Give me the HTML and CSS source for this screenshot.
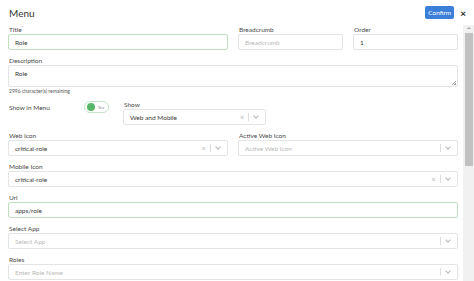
FILE: index.html
```html
<html>
  <head>
    <title>Menu</title>
    <link rel="stylesheet" href="styles.css">
  </head>
  <body>
    <div class="dialog">
      <div class="dialog-header">
        <span class="dialog-title">Menu</span>
        <button class="btn-confirm">Confirm</button>
        <span class="btn-close">&times;</span>
      </div>

      <div class="dialog-main">
        <div class="dialog-body">
          <div class="grid">
            <div class="field span-6">
              <label>Title<sup>*</sup></label>
              <div class="input valid">Role</div>
            </div>
            <div class="field span-3">
              <label>Breadcrumb</label>
              <div class="input placeholder">Breadcrumb</div>
            </div>
            <div class="field span-3">
              <label>Order</label>
              <div class="input">1</div>
            </div>

            <div class="field span-12">
              <label>Description</label>
              <div class="textarea">Role<span class="resize"></span></div>
              <div class="hint">2996 character(s) remaining</div>
            </div>

            <div class="field span-3 toggle-field">
              <label>Show in Menu</label>
              <div class="toggle"><span class="knob"></span><span class="toggle-text">Yes</span></div>
            </div>
            <div class="field span-4">
              <label>Show</label>
              <div class="select">
                <span class="value">Web and Mobile</span>
                <span class="clear">&times;</span><span class="sep"></span><span class="chev"></span>
              </div>
            </div>
            <div class="span-5"></div>

            <div class="field span-6">
              <label>Web Icon</label>
              <div class="select">
                <span class="value">critical-role</span>
                <span class="clear">&times;</span><span class="sep"></span><span class="chev"></span>
              </div>
            </div>
            <div class="field span-6">
              <label>Active Web Icon</label>
              <div class="select">
                <span class="value placeholder">Active Web Icon</span>
                <span class="sep"></span><span class="chev"></span>
              </div>
            </div>

            <div class="field span-12">
              <label>Mobile Icon</label>
              <div class="select">
                <span class="value">critical-role</span>
                <span class="clear">&times;</span><span class="sep"></span><span class="chev"></span>
              </div>
            </div>

            <div class="field span-12">
              <label>Url</label>
              <div class="input valid">apps/role</div>
            </div>

            <div class="field span-12">
              <label>Select App</label>
              <div class="select">
                <span class="value placeholder">Select App</span>
                <span class="sep"></span><span class="chev"></span>
              </div>
            </div>

            <div class="field span-12">
              <label>Roles</label>
              <div class="select">
                <span class="value placeholder">Enter Role Name</span>
                <span class="sep"></span><span class="chev"></span>
              </div>
            </div>
          </div>
        </div>

        <div class="scrollbar">
          <span class="scroll-up"></span>
          <span class="scroll-thumb"></span>
        </div>
      </div>
    </div>
  </body>
</html>
```

FILE: styles.css
```css
body {
  margin: 0px;
  font-family: Lato, "Open Sans", sans-serif;
  color: #3a3a3a;
  background: #ffffff;
}

.dialog {
  width: 474px;
  height: 281px;
  display: flex;
  flex-direction: column;
  overflow: hidden;
}

.dialog-header {
  display: flex;
  align-items: center;
  height: 25px;
  padding: 0px 8px 0px 9px;
  flex-shrink: 0;
}

.dialog-title {
  font-size: 10px;
  flex: 1;
  color: #333333;
}

.btn-confirm {
  font-family: Lato, sans-serif;
  font-size: 6.5px;
  color: #ffffff;
  background: #3b7fd9;
  border: none;
  border-radius: 2px;
  height: 13px;
  width: 29px;
  padding: 0px;
  margin-right: 6px;
}

.btn-close {
  font-size: 10px;
  font-weight: bold;
  color: #222222;
  line-height: 10px;
}

.dialog-main {
  flex: 1;
  display: flex;
  min-height: 0;
}

.dialog-body {
  flex: 1;
  overflow: hidden;
  padding: 0px 5px 0px 8px;
}

/* scroll track drawn by hand, headless chrome hides the real one */
.scrollbar {
  width: 11px;
  flex-shrink: 0;
  background: #f1f1f1;
  display: flex;
  flex-direction: column;
  align-items: center;
}

.scroll-up {
  width: 0px;
  height: 0px;
  border-left: 2px solid transparent;
  border-right: 2px solid transparent;
  border-bottom: 2px solid #a3a3a3;
  margin: 2px 0px 4px 0px;
}

.scroll-thumb {
  width: 8px;
  height: 133px;
  background: #c1c1c1;
}

.grid {
  display: grid;
  grid-template-columns: repeat(12, 1fr);
  column-gap: 10px;
  row-gap: 6px;
}

.span-3 { grid-column: span 3; }
.span-4 { grid-column: span 4; }
.span-5 { grid-column: span 5; }
.span-6 { grid-column: span 6; }
.span-12 { grid-column: span 12; }

.field label {
  display: block;
  font-size: 6.5px;
  line-height: 9px;
  margin-left: 1px;
  color: #4a4a4a;
}

.field label sup {
  font-size: 4px;
  vertical-align: top;
  line-height: 6px;
}

.input,
.select,
.textarea {
  box-sizing: border-box;
  height: 16px;
  border: 1px solid #e4e4e4;
  border-radius: 2px;
  font-size: 6.5px;
  padding: 0px 6px;
  display: flex;
  align-items: center;
  background: #ffffff;
}

.input.valid {
  border-color: #bfdfc0;
}

.placeholder {
  color: #b9b9b9;
}

.textarea {
  position: relative;
  height: 22px;
  align-items: flex-start;
  padding-top: 4px;
}

.resize {
  position: absolute;
  right: 1px;
  bottom: 1px;
  width: 4px;
  height: 4px;
  background: linear-gradient(135deg, transparent 50%, #a8a8a8 50%, #a8a8a8 60%, transparent 60%, transparent 75%, #a8a8a8 75%);
}

.hint {
  font-size: 5px;
  line-height: 6px;
  margin-top: 1px;
  margin-left: 1px;
  color: #555555;
}

.select .value {
  flex: 1;
}

.select .clear {
  color: #bdbdbd;
  font-size: 8px;
  margin-right: 4px;
}

.select .sep {
  width: 1px;
  height: 8px;
  background: #dddddd;
  margin-right: 5px;
}

.select .chev {
  width: 3px;
  height: 3px;
  border-right: 1px solid #b8b8b8;
  border-bottom: 1px solid #b8b8b8;
  transform: rotate(45deg);
  margin: 0px 1px 2px 0px;
}

.toggle-field {
  display: flex;
  align-items: center;
  justify-content: space-between;
  align-self: start;
  margin-top: 1px;
}

.toggle {
  box-sizing: border-box;
  width: 25px;
  height: 12px;
  border: 1px solid #c8e3c8;
  border-radius: 6px;
  display: flex;
  align-items: center;
  padding: 0px 2px;
  margin-right: 4px;
}

.knob {
  width: 8px;
  height: 8px;
  border-radius: 50%;
  background: #58b86a;
}

.toggle-text {
  font-size: 4px;
  color: #777777;
  margin-left: 3px;
}
```
